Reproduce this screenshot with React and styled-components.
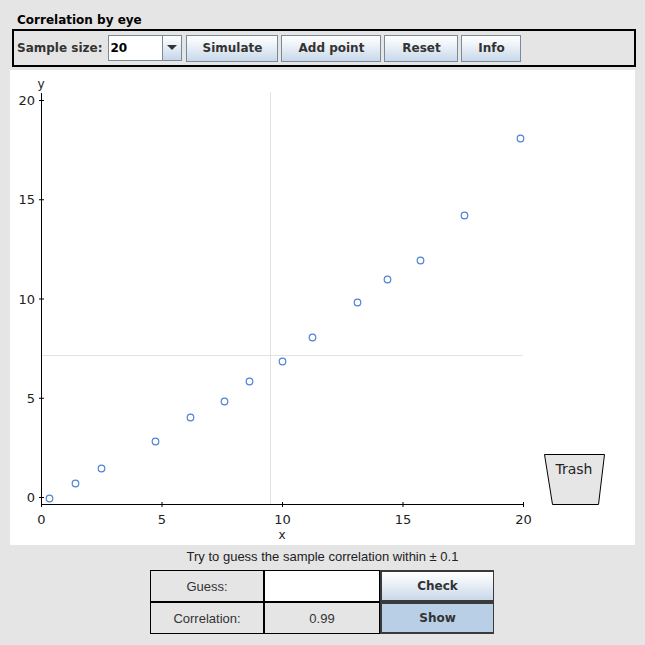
import React from "react";
import styled, { createGlobalStyle } from "styled-components";

const Global = createGlobalStyle`
  html, body { margin: 0; padding: 0; background: #e5e5e5; }
  body { width: 645px; height: 645px; overflow: hidden; font-family: "DejaVu Sans", sans-serif; }
`;

const Page = styled.div`
  display: flex;
  flex-direction: column;
  width: 645px;
  height: 645px;
  background: #e5e5e5;
`;

const Title = styled.div`
  padding: 13px 0 0 17px;
  height: 16px;
  font: bold 12px/15px "DejaVu Sans", sans-serif;
  color: #000;
`;

const Toolbar = styled.div`
  margin: 0 0 0 12px;
  width: 617px;
  height: 34px;
  border: 2px solid #000;
  display: flex;
  align-items: center;
  padding-left: 3px;
  box-sizing: content-box;
`;

const Label = styled.span`
  font: bold 12px "DejaVu Sans", sans-serif;
  color: #333;
  margin-right: 6px;
`;

const Combo = styled.div`
  display: flex;
  width: 74px;
  height: 26px;
  box-sizing: border-box;
  border: 1px solid #7a8a99;
  margin-right: 4px;
  background: #fff;
  margin-top: -1px;
`;

const ComboValue = styled.div`
  flex: 1;
  font: bold 12px "DejaVu Sans", sans-serif;
  color: #000;
  display: flex;
  align-items: center;
  padding-left: 1px;
`;

const ComboArrow = styled.div`
  width: 18px;
  border-left: 1px solid #7a8a99;
  background: linear-gradient(#ffffff, #dde8f3 60%, #c5d6e8);
  display: flex;
  align-items: center;
  justify-content: center;
`;

const Button = styled.button`
  height: 27px;
  box-sizing: border-box;
  width: ${(p) => p.$w}px;
  margin-right: 3px;
  border: 1px solid #7a8a99;
  background: linear-gradient(#ffffff 0%, #eef3f8 35%, #c8d8ea 100%);
  font: bold 12px "DejaVu Sans", sans-serif;
  color: #333;
  padding: 0;
  cursor: default;
`;

const PlotPanel = styled.div`
  margin: 3px 0 0 10px;
  width: 625px;
  height: 475px;
  background: #fff;
`;

const Hint = styled.div`
  width: 645px;
  text-align: center;
  font: 13px/16px "Liberation Sans", Arial, sans-serif;
  color: #222;
  margin-top: 4px;
`;

const Table = styled.div`
  margin: 5px 0 0 150px;
  width: 344px;
  display: grid;
  grid-template-columns: 114px 116px 114px;
  grid-template-rows: 32px 32px;
`;

const Cell = styled.div`
  box-sizing: border-box;
  border: 1px solid #000;
  background: ${(p) => (p.$white ? "#fff" : "#e5e5e5")};
  display: flex;
  align-items: center;
  justify-content: center;
  font: 13px "Liberation Sans", Arial, sans-serif;
  color: #333;
`;

const CellButton = styled.div`
  box-sizing: border-box;
  border: 2px solid #3a3a3a;
  border-right-width: 1px;
  background: ${(p) =>
    p.$pressed
      ? "#b8cfe5"
      : "linear-gradient(#ffffff 0%, #eef3f8 35%, #c8d8ea 100%)"};
  display: flex;
  align-items: center;
  justify-content: center;
  font: bold 12px "DejaVu Sans", sans-serif;
  color: #333;
`;

const points = [
  [49, 498], [75, 483], [101, 468], [155, 441], [190, 417], [224, 401],
  [249, 381], [282, 361], [312, 337], [357, 302], [387, 279], [420, 260],
  [464, 215], [520, 138],
];

const xTicks = [0, 5, 10, 15, 20].map((v) => ({ v, x: 41 + v * 24.1 }));
const yTicks = [0, 5, 10, 15, 20].map((v) => ({ v, y: 497 - v * 19.85 }));

function Plot() {
  return (
    <svg width="625" height="475" viewBox="10 70 625 475">
      <g fontFamily="DejaVu Sans, sans-serif" fontSize="13" fill="#222">
        <line x1="270.5" y1="92" x2="270.5" y2="504" stroke="#e2e2e2" />
        <line x1="41" y1="355.5" x2="523" y2="355.5" stroke="#e2e2e2" />
        <line x1="41.5" y1="93" x2="41.5" y2="504" stroke="#000" strokeWidth="1" />
        <line x1="41" y1="504.5" x2="524" y2="504.5" stroke="#000" strokeWidth="1" />
        {yTicks.map((t) => (
          <g key={"y" + t.v}>
            <line x1="39" y1={t.y + 0.5} x2="44" y2={t.y + 0.5} stroke="#000" />
            <text x="35" y={t.y + 5} textAnchor="end">{t.v}</text>
          </g>
        ))}
        {xTicks.map((t) => (
          <g key={"x" + t.v}>
            <line x1={t.x + 0.5} y1="502" x2={t.x + 0.5} y2="507" stroke="#000" />
            <text x={t.x + 0.5} y="524" textAnchor="middle">{t.v}</text>
          </g>
        ))}
        <text x="41" y="88" textAnchor="middle" fontSize="12">y</text>
        <text x="282" y="539" textAnchor="middle" fontSize="12">x</text>
        {points.map(([x, y], i) => (
          <circle key={i} cx={x + 0.5} cy={y + 0.5} r="3.3" fill="#fff" stroke="#4f82d6" strokeWidth="1.2" />
        ))}
        <polygon points="544.5,454.5 604.5,454.5 598.5,504.5 552.5,504.5" fill="#e6e6e6" stroke="#000" />
        <text x="574" y="474" textAnchor="middle" fontSize="14">Trash</text>
      </g>
    </svg>
  );
}

export default function App() {
  return (
    <Page>
      <Global />
      <Title>Correlation by eye</Title>
      <Toolbar>
        <Label>Sample size:</Label>
        <Combo>
          <ComboValue>20</ComboValue>
          <ComboArrow>
            <svg width="10" height="6" viewBox="0 0 10 6">
              <polygon points="0,0 10,0 5,5" fill="#333" />
            </svg>
          </ComboArrow>
        </Combo>
        <Button $w={92}>Simulate</Button>
        <Button $w={100}>Add point</Button>
        <Button $w={74}>Reset</Button>
        <Button $w={60}>Info</Button>
      </Toolbar>
      <PlotPanel>
        <Plot />
      </PlotPanel>
      <Hint>Try to guess the sample correlation within ± 0.1</Hint>
      <Table>
        <Cell>Guess:</Cell>
        <Cell $white />
        <CellButton>Check</CellButton>
        <Cell>Correlation:</Cell>
        <Cell>0.99</Cell>
        <CellButton $pressed>Show</CellButton>
      </Table>
    </Page>
  );
}
